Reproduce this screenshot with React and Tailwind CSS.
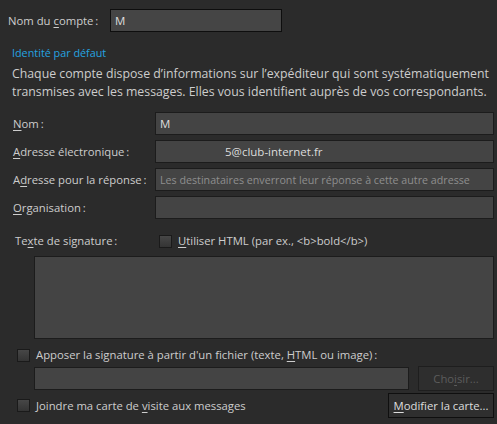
import { useState } from "react";

const font = { fontFamily: '"Open Sans", "Noto Sans", sans-serif' };

const Field = ({ value, placeholder, className = "" }) => (
  <div
    className={`flex h-[23px] items-center border border-[#1c1c1c] bg-[#444444] px-[4px] text-[#dcdcdc] ${className}`}
  >
    {value ? (
      <span className="whitespace-nowrap text-[11.5px]">{value}</span>
    ) : (
      <span className="whitespace-nowrap text-[10.7px] text-[#8e8e8e]">{placeholder}</span>
    )}
  </div>
);

const Check = ({ checked, onChange }) => (
  <button
    onClick={onChange}
    className="h-[13px] w-[13px] shrink-0 border border-[#1a1a1a] bg-gradient-to-b from-[#474747] to-[#343434]"
  >
    {checked ? <span className="block text-[10px] leading-[11px] text-[#ddd]">✓</span> : null}
  </button>
);

const Label = ({ before, u, after, className = "" }) => (
  <span className={`whitespace-nowrap ${className}`}>
    {before}
    <span className="underline underline-offset-2">{u}</span>
    {after}
  </span>
);

const rows = [
  { before: "", u: "N", after: "om\u2009:", value: "M" },
  { before: "", u: "A", after: "dresse électronique\u2009:", value: "5@club-internet.fr", pad: true },
  {
    before: "A",
    u: "d",
    after: "resse pour la réponse\u2009:",
    placeholder: "Les destinataires enverront leur réponse à cette autre adresse",
  },
  { before: "", u: "O", after: "rganisation\u2009:", value: "" },
];

export default function App() {
  const [html, setHtml] = useState(false);
  const [file, setFile] = useState(false);
  const [card, setCard] = useState(false);

  return (
    <div
      style={font}
      className="h-[424px] w-[497px] overflow-hidden bg-[#2b2b2b] text-[11.3px] leading-[16px] text-[#cdcdcd]"
    >
      <div className="flex items-center pl-[8px] pt-[9px]">
        <Label before="Nom du " u="c" after={"ompte\u2009:"} className="w-[102px]" />
        <div className="flex h-[23px] w-[172px] items-center border border-[#0e0e0e] bg-[#454545] px-[4px] text-[11.5px] text-[#dcdcdc]">
          M
        </div>
      </div>

      <div className="mt-[13px] pl-[12px] text-[10.8px] text-[#25a3e0]">Identité par défaut</div>
      <p className="mt-[4px] pl-[12px] pr-[2px] text-[12.3px] leading-[18px]">
        Chaque compte dispose d’informations sur l’expéditeur qui sont systématiquement
        <br />
        transmises avec les messages. Elles vous identifient auprès de vos correspondants.
      </p>

      <div className="mt-[11px] flex flex-col gap-[5px] pl-[13px] pr-[3px]">
        {rows.map((r, i) => (
          <div key={i} className="flex items-center">
            <Label before={r.before} u={r.u} after={r.after} className="w-[142px]" />
            <Field
              value={r.value}
              placeholder={r.placeholder}
              className={`flex-1 ${r.pad ? "pl-[69px]" : ""}`}
            />
          </div>
        ))}
      </div>

      <div className="mt-[14px] flex items-center pl-[15px]">
        <Label before="Te" u="x" after={"te de signature\u2009:"} className="w-[144px]" />
        <Check checked={html} onChange={() => setHtml(!html)} />
        <Label
          before=""
          u="U"
          after="tiliser HTML (par ex., <b>bold</b>)"
          className="ml-[6px]"
        />
      </div>

      <div className="ml-[34px] mr-[3px] mt-[7px] h-[83px] border border-[#1c1c1c] bg-[#444444]" />

      <div className="mt-[8px] flex items-center pl-[17px]">
        <Check checked={file} onChange={() => setFile(!file)} />
        <Label
          before="Apposer la signature à partir d'un fichier (texte, "
          u="H"
          after={"TML ou image)\u2009:"}
          className="ml-[6px]"
        />
      </div>

      <div className="ml-[34px] mr-[3px] mt-[3px] flex items-center justify-between">
        <div className="h-[23px] w-[375px] border border-[#1c1c1c] bg-[#444444]" />
        <button className="h-[25px] w-[76px] border border-[#1e1e1e] bg-[#2e2e2e] text-[#5c5c5c]">
          Cho<span className="underline underline-offset-2">i</span>sir...
        </button>
      </div>

      <div className="mt-[2px] flex items-center justify-between pl-[17px] pr-[3px]">
        <div className="flex items-center">
          <Check checked={card} onChange={() => setCard(!card)} />
          <Label before="Joindre ma carte de " u="v" after="isite aux messages" className="ml-[6px]" />
        </div>
        <button className="h-[25px] w-[106px] border border-[#0f0f0f] bg-[#2f2f2f] text-[#dddddd]">
          <span className="underline underline-offset-2">M</span>odifier la carte...
        </button>
      </div>
    </div>
  );
}
